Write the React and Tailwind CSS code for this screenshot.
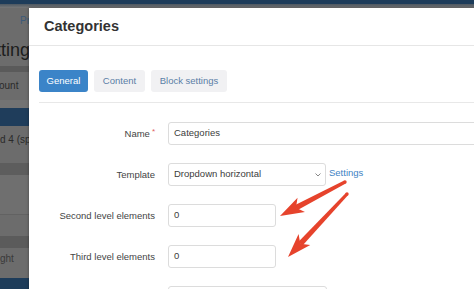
import React from "react";

function Arrow({ tail, tip }) {
  const dx = tip[0] - tail[0];
  const dy = tip[1] - tail[1];
  const L = Math.hypot(dx, dy);
  const u = [dx / L, dy / L];
  const n = [-u[1], u[0]];
  const B = [tip[0] - 24 * u[0], tip[1] - 24 * u[1]];
  const N = [tip[0] - 18 * u[0], tip[1] - 18 * u[1]];
  const c1 = [B[0] + 8 * n[0], B[1] + 8 * n[1]];
  const c2 = [B[0] - 8 * n[0], B[1] - 8 * n[1]];
  const s1 = [tail[0] + 1.6 * n[0], tail[1] + 1.6 * n[1]];
  const s2 = [tail[0] - 1.6 * n[0], tail[1] - 1.6 * n[1]];
  const h1 = [N[0] + 2.8 * n[0], N[1] + 2.8 * n[1]];
  const h2 = [N[0] - 2.8 * n[0], N[1] - 2.8 * n[1]];
  const pts = (a) => a.map((p) => p.join(",")).join(" ");
  return (
    <g fill="#e6432c">
      <circle cx={tail[0]} cy={tail[1]} r="1.7" />
      <polygon points={pts([s1, h1, h2, s2])} />
      <polygon points={pts([tip, c1, N, c2])} />
    </g>
  );
}

function Row({ label, required, children }) {
  return (
    <div className="flex items-center h-[23px] mb-[18px]">
      <div className="w-[116px] text-right text-[9.5px] text-[#444444] leading-none">
        {label}
        {required && (
          <span className="inline-block ml-[2px] text-[8px] text-[#e06060] -translate-y-[3px]">*</span>
        )}
      </div>
      <div className="ml-[13px] flex items-center h-full">{children}</div>
    </div>
  );
}

function Input({ value, w }) {
  return (
    <div
      className={`h-[23px] ${w} border border-[#dcdcdc] rounded-[3px] pl-[5px] flex items-center text-[9.5px] text-[#3c3c3c]`}
    >
      {value}
    </div>
  );
}

export default function App() {
  return (
    <div className="relative w-[474px] h-[289px] overflow-hidden bg-[#6c6c6c] font-['Liberation_Sans',Arial,sans-serif]">
      {/* dimmed page behind */}
      <div className="flex flex-col">
        <div className="h-[4px] bg-[#1d3c5a]" />
        <div className="h-[4px] bg-gradient-to-b from-[#4d5862] to-[#777777]" />
        <div className="h-[26px] pt-[6px] pl-[20px] text-[10px] leading-[14px] text-[#3c5a79]">Pr</div>
        <div className="h-[32px] -ml-[26px] text-[18px] leading-[32px] text-[#1c1c1c] whitespace-nowrap">Settings</div>
        <div className="h-[6px] bg-[#5a5a5a]" />
        <div className="h-[28px] -ml-[1px] text-[10px] leading-[28px] text-[#2a2a2a] whitespace-nowrap">ount</div>
        <div className="h-[8px] bg-[#737373]" />
        <div className="h-[18px] bg-[#1f3d5b]" />
        <div className="h-[28px] text-[10px] leading-[28px] text-[#2a2a2a] whitespace-nowrap">d 4 (sp</div>
        <div className="h-[9px]" />
        <div className="h-[12px] bg-[#5d5d5d]" />
        <div className="h-[40px] bg-[#6f6f6f] border-b border-[#626262]" />
        <div className="h-[21px]" />
        <div className="h-[12px] bg-[#5b5b5b]" />
        <div className="h-[30px] pt-[1px] text-[10px] leading-[20px] text-[#3a3a3a] whitespace-nowrap">ght</div>
        <div className="h-[11px] bg-[#1d3c5a]" />
      </div>

      {/* modal */}
      <div className="absolute left-[29px] top-[8px] w-[470px] h-[300px] bg-white shadow-[0_0_3px_rgba(0,0,0,0.35)] flex flex-col">
        <div className="h-[38px] shrink-0 border-b border-[#e6e6e6] pl-[15px] pt-[1px] flex items-center text-[14.5px] font-bold text-[#333333]">
          Categories
        </div>
        <div className="pl-[10px] pt-[24px]">
          <div className="flex gap-[6px]">
            <div className="w-[49px] h-[22px] rounded-[3px] bg-[#3b84c8] text-white text-[9.5px] flex items-center justify-center">
              General
            </div>
            <div className="w-[51px] h-[22px] rounded-[3px] bg-[#f1f1f3] text-[#5a7ea6] text-[9.5px] flex items-center justify-center">
              Content
            </div>
            <div className="w-[76px] h-[22px] rounded-[3px] bg-[#f1f1f3] text-[#5a7ea6] text-[9.5px] flex items-center justify-center">
              Block settings
            </div>
          </div>
          <div className="mt-[10px] border-t border-[#e8e8e8] pt-[19px]">
            <Row label="Name" required>
              <Input value="Categories" w="w-[330px]" />
            </Row>
            <Row label="Template">
              <div className="h-[23px] w-[158px] border border-[#dcdcdc] rounded-[3px] pl-[5px] pr-[4px] flex items-center justify-between text-[9.5px] text-[#3c3c3c]">
                <span>Dropdown horizontal</span>
                <svg width="6" height="4" viewBox="0 0 6 4" className="mt-[1px]">
                  <path d="M0.5 0.5 L3 3 L5.5 0.5" fill="none" stroke="#7a7a7a" strokeWidth="0.9" />
                </svg>
              </div>
              <span className="ml-[3px] text-[9.5px] text-[#4082c4] -translate-y-[1px]">Settings</span>
            </Row>
            <Row label="Second level elements">
              <Input value="0" w="w-[108px]" />
            </Row>
            <Row label="Third level elements">
              <Input value="0" w="w-[108px]" />
            </Row>
            <Row label="">
              <Input value="" w="w-[159px]" />
            </Row>
          </div>
        </div>
      </div>

      {/* annotation arrows */}
      <svg className="absolute left-0 top-0 pointer-events-none" width="474" height="289" viewBox="0 0 474 289">
        <Arrow tail={[345, 182]} tip={[280, 216]} />
        <Arrow tail={[347, 194]} tip={[288, 257]} />
      </svg>
    </div>
  );
}
